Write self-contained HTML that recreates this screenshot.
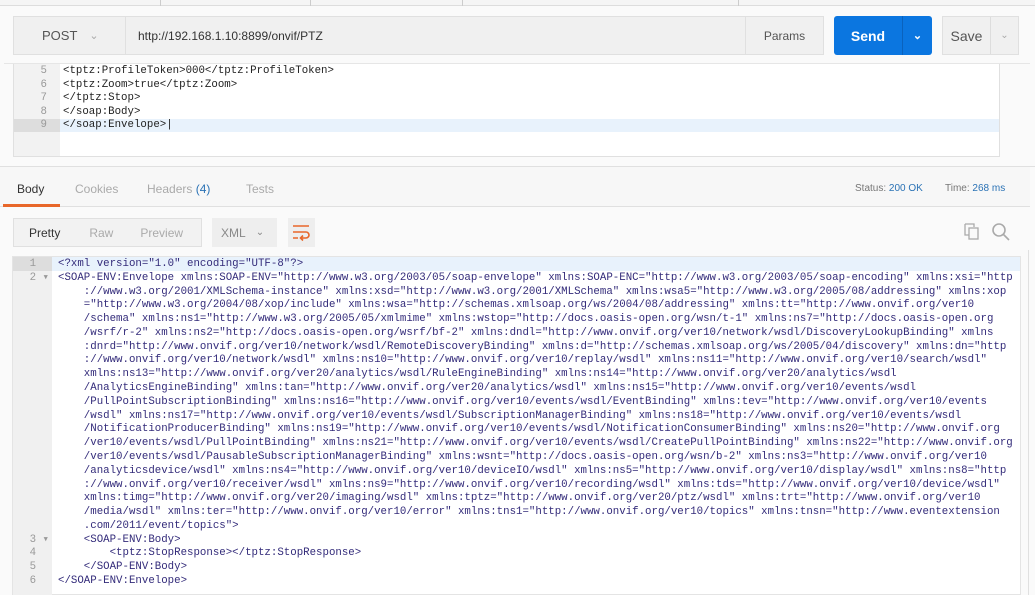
<!DOCTYPE html>
<html><head><meta charset="utf-8"><style>
*{margin:0;padding:0;box-sizing:border-box}
body{width:1035px;height:595px;overflow:hidden;background:#fafafa;font-family:"Liberation Sans",sans-serif;position:relative}
.abs{position:absolute}
.mono{font-family:"Liberation Mono",monospace}
.code{font-size:10.75px;line-height:13.78px;white-space:pre;color:#332b7a}
.ln{color:#999;text-align:right}
.btn{position:absolute;border:1px solid #e0e0e0;background:#f0f0f0;color:#555;font-size:13px;display:flex;align-items:center}
</style></head><body>
<div class="abs" style="left:0;top:0;width:1035px;height:6px;background:#f5f5f5;border-bottom:1px solid #ddd"></div>
<div class="abs" style="left:160px;top:0;width:1px;height:6px;background:#ccc"></div>
<div class="abs" style="left:310px;top:0;width:1px;height:6px;background:#ccc"></div>
<div class="abs" style="left:462px;top:0;width:1px;height:6px;background:#ccc"></div>
<div class="abs" style="left:738px;top:0;width:1px;height:6px;background:#ccc"></div>
<div class="abs" style="left:4px;top:8px;width:1026px;height:56px;background:#fafafa;border-bottom:1px solid #e6e6e6"></div>
<div class="btn" style="left:13px;top:16px;width:113px;height:39px;padding-left:28px">POST <span style="margin-left:12px;color:#aaa;font-size:11px">&#8964;</span></div>
<div class="btn" style="left:125px;top:16px;width:621px;height:39px;padding-left:12px;color:#333;font-size:12px">http://192.168.1.10:8899/onvif/PTZ</div>
<div class="btn" style="left:745px;top:16px;width:79px;height:39px;justify-content:center;font-size:12px">Params</div>
<div class="abs" style="left:834px;top:16px;width:98px;height:39px;background:#0b76e0;border-radius:3px;color:#fff;font-weight:bold;font-size:14px;display:flex;align-items:center"><span style="width:68px;text-align:center">Send</span><span style="width:1px;height:39px;background:#0a62bd"></span><span style="flex:1;text-align:center;font-size:11px">&#8964;</span></div>
<div class="btn" style="left:942px;top:16px;width:77px;height:39px;font-size:14px"><span style="width:47px;text-align:center">Save</span><span style="width:1px;height:37px;background:#ddd"></span><span style="flex:1;text-align:center;color:#aaa;font-size:10px">&#8964;</span></div>
<div class="abs" style="left:13px;top:64px;width:987px;height:93px;background:#fff;border:1px solid #e0e0e0;border-top:none"></div>
<div class="abs" style="left:14px;top:64px;width:46px;height:92px;background:#f2f2f2"></div>
<div class="abs" style="left:14px;top:119px;width:46px;height:13px;background:#ddd"></div>
<div class="abs" style="left:60px;top:119px;width:939px;height:13px;background:#e8f2fc"></div>
<div class="abs mono code ln" style="left:14px;top:65px;width:33px;line-height:13.5px;color:#999">5
6
7
8
9</div>
<div class="abs mono code" style="left:63px;top:65px;line-height:13.5px;color:#222">&lt;tptz:ProfileToken&gt;000&lt;/tptz:ProfileToken&gt;
&lt;tptz:Zoom&gt;true&lt;/tptz:Zoom&gt;
&lt;/tptz:Stop&gt;
&lt;/soap:Body&gt;
&lt;/soap:Envelope&gt;|</div>
<div class="abs" style="left:0;top:166px;width:1035px;height:1px;background:#e0e0e0"></div>
<div class="abs" style="left:0;top:167px;width:1030px;height:40px;background:#f7f7f7;border-bottom:1px solid #e0e0e0"></div>
<div class="abs" style="left:17px;top:182px;font-size:12px;color:#333">Body</div>
<div class="abs" style="left:75px;top:182px;font-size:12px;color:#aaa">Cookies</div>
<div class="abs" style="left:147px;top:182px;font-size:12px;color:#aaa">Headers <span style="color:#2a72b5">(4)</span></div>
<div class="abs" style="left:246px;top:182px;font-size:12px;color:#aaa">Tests</div>
<div class="abs" style="left:3px;top:204px;width:57px;height:3px;background:#e8672a"></div>
<div class="abs" style="left:855px;top:183px;font-size:10px;color:#777">Status: <span style="color:#2a72b5">200 OK</span></div>
<div class="abs" style="left:945px;top:183px;font-size:10px;color:#777">Time: <span style="color:#2a72b5">268 ms</span></div>
<div class="btn" style="left:13px;top:218px;width:189px;height:29px;font-size:12px;background:#f2f2f2"><span style="margin-left:15px;color:#333">Pretty</span><span style="margin-left:29px;color:#aaa">Raw</span><span style="margin-left:27px;color:#aaa">Preview</span></div>
<div class="btn" style="left:212px;top:218px;width:65px;height:29px;font-size:12px;border:none;background:#eee;padding-left:9px;color:#888">XML <span style="margin-left:10px;font-size:10px">&#8964;</span></div>
<div class="abs" style="left:288px;top:218px;width:27px;height:29px;background:#eee"></div>
<svg class="abs" style="left:291px;top:222px" width="21" height="20" viewBox="0 0 21 20" fill="none" stroke="#e8672a" stroke-width="1.6"><path d="M2 4H18M2 10H15a3 3 0 0 1 0 6H10M12 13.5l-2.5 2.5 2.5 2.5M2 16H7"/></svg>
<svg class="abs" style="left:964px;top:223px" width="16" height="18" viewBox="0 0 16 18" fill="none" stroke="#aaa" stroke-width="1.3"><path d="M1 1h9v3M1 1v11h4"/><rect x="5" y="5" width="9" height="11"/></svg>
<svg class="abs" style="left:991px;top:222px" width="20" height="20" viewBox="0 0 20 20" fill="none" stroke="#aaa" stroke-width="1.6"><circle cx="8" cy="8" r="6"/><path d="M12.5 12.5L18 18"/></svg>
<div class="abs" style="left:12px;top:256px;width:1009px;height:339px;background:#fff;border:1px solid #e4e4e4"></div>
<div class="abs" style="left:13px;top:257px;width:39px;height:338px;background:#f0f0f0"></div>
<div class="abs" style="left:52px;top:257px;width:968px;height:14px;background:#e8f2fc"></div>
<div class="abs" style="left:13px;top:257px;width:39px;height:14px;background:#ddd"></div>
<div class="abs" style="left:1028px;top:250px;width:1px;height:345px;background:#e0e0e0"></div>
<div class="abs mono code ln" style="left:13px;top:258px;width:36px">1  
2 ▾


















3 ▾
4  
5  
6  </div>
<div class="abs mono code" style="left:58px;top:258px">&lt;?xml version="1.0" encoding="UTF-8"?&gt;
&lt;SOAP-ENV:Envelope xmlns:SOAP-ENV="http://www.w3.org/2003/05/soap-envelope" xmlns:SOAP-ENC="http://www.w3.org/2003/05/soap-encoding" xmlns:xsi="http
    ://www.w3.org/2001/XMLSchema-instance" xmlns:xsd="http://www.w3.org/2001/XMLSchema" xmlns:wsa5="http://www.w3.org/2005/08/addressing" xmlns:xop
    ="http://www.w3.org/2004/08/xop/include" xmlns:wsa="http://schemas.xmlsoap.org/ws/2004/08/addressing" xmlns:tt="http://www.onvif.org/ver10
    /schema" xmlns:ns1="http://www.w3.org/2005/05/xmlmime" xmlns:wstop="http://docs.oasis-open.org/wsn/t-1" xmlns:ns7="http://docs.oasis-open.org
    /wsrf/r-2" xmlns:ns2="http://docs.oasis-open.org/wsrf/bf-2" xmlns:dndl="http://www.onvif.org/ver10/network/wsdl/DiscoveryLookupBinding" xmlns
    :dnrd="http://www.onvif.org/ver10/network/wsdl/RemoteDiscoveryBinding" xmlns:d="http://schemas.xmlsoap.org/ws/2005/04/discovery" xmlns:dn="http
    ://www.onvif.org/ver10/network/wsdl" xmlns:ns10="http://www.onvif.org/ver10/replay/wsdl" xmlns:ns11="http://www.onvif.org/ver10/search/wsdl"
    xmlns:ns13="http://www.onvif.org/ver20/analytics/wsdl/RuleEngineBinding" xmlns:ns14="http://www.onvif.org/ver20/analytics/wsdl
    /AnalyticsEngineBinding" xmlns:tan="http://www.onvif.org/ver20/analytics/wsdl" xmlns:ns15="http://www.onvif.org/ver10/events/wsdl
    /PullPointSubscriptionBinding" xmlns:ns16="http://www.onvif.org/ver10/events/wsdl/EventBinding" xmlns:tev="http://www.onvif.org/ver10/events
    /wsdl" xmlns:ns17="http://www.onvif.org/ver10/events/wsdl/SubscriptionManagerBinding" xmlns:ns18="http://www.onvif.org/ver10/events/wsdl
    /NotificationProducerBinding" xmlns:ns19="http://www.onvif.org/ver10/events/wsdl/NotificationConsumerBinding" xmlns:ns20="http://www.onvif.org
    /ver10/events/wsdl/PullPointBinding" xmlns:ns21="http://www.onvif.org/ver10/events/wsdl/CreatePullPointBinding" xmlns:ns22="http://www.onvif.org
    /ver10/events/wsdl/PausableSubscriptionManagerBinding" xmlns:wsnt="http://docs.oasis-open.org/wsn/b-2" xmlns:ns3="http://www.onvif.org/ver10
    /analyticsdevice/wsdl" xmlns:ns4="http://www.onvif.org/ver10/deviceIO/wsdl" xmlns:ns5="http://www.onvif.org/ver10/display/wsdl" xmlns:ns8="http
    ://www.onvif.org/ver10/receiver/wsdl" xmlns:ns9="http://www.onvif.org/ver10/recording/wsdl" xmlns:tds="http://www.onvif.org/ver10/device/wsdl"
    xmlns:timg="http://www.onvif.org/ver20/imaging/wsdl" xmlns:tptz="http://www.onvif.org/ver20/ptz/wsdl" xmlns:trt="http://www.onvif.org/ver10
    /media/wsdl" xmlns:ter="http://www.onvif.org/ver10/error" xmlns:tns1="http://www.onvif.org/ver10/topics" xmlns:tnsn="http://www.eventextension
    .com/2011/event/topics"&gt;
    &lt;SOAP-ENV:Body&gt;
        &lt;tptz:StopResponse&gt;&lt;/tptz:StopResponse&gt;
    &lt;/SOAP-ENV:Body&gt;
&lt;/SOAP-ENV:Envelope&gt;</div>
</body></html>
